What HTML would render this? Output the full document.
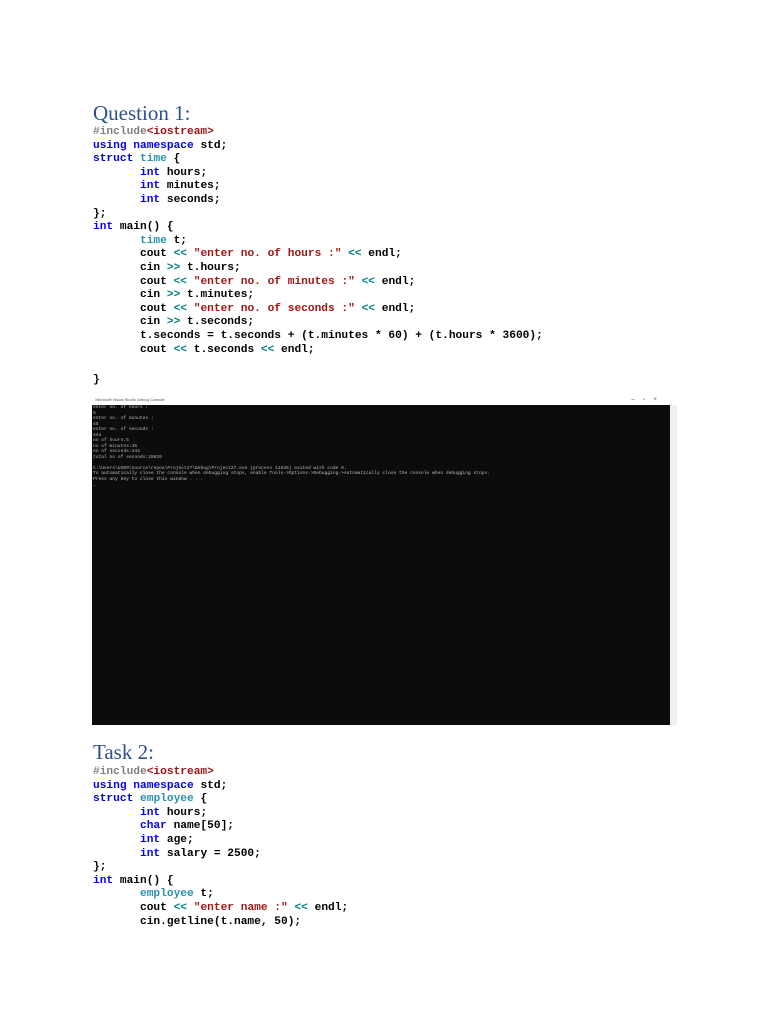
<!DOCTYPE html>
<html><head><meta charset="utf-8"><style>
body{margin:0;width:768px;height:1024px;background:#fff;position:relative;overflow:hidden}
h2{position:absolute;margin:0;font:21px "Liberation Serif",serif;color:#2f4f8f;left:93px}
pre{position:absolute;left:93px;margin:0;font:bold 11.2px/13.6px "Liberation Mono",monospace;color:#000;tab-size:7;-moz-tab-size:7}
.k{color:#0000ff}.t{color:#2b91af}.s{color:#a31515}.p{color:#808080}.o{color:#008080}
.con{position:absolute;left:92px;top:397px;width:585px;height:328px;background:#0c0c0c}
.tb{position:absolute;left:0;top:0;width:585px;height:8px;background:#fff;font:4px "Liberation Sans",sans-serif;color:#555}
.sb{position:absolute;right:0;top:8px;width:7px;height:320px;background:#f0f0f0}
.ct{position:absolute;left:1px;top:8px;font:4.6px/5.5px "Liberation Mono",monospace;color:#bbb;white-space:pre}
</style></head><body>
<h2 style="top:101px">Question 1:</h2>
<pre style="top:126px"><span class="p">#include</span><span class="s">&lt;iostream&gt;</span>
<span class="k">using</span> <span class="k">namespace</span> std;
<span class="k">struct</span> <span class="t">time</span> {
	<span class="k">int</span> hours;
	<span class="k">int</span> minutes;
	<span class="k">int</span> seconds;
};
<span class="k">int</span> main() {
	<span class="t">time</span> t;
	cout <span class="o">&lt;&lt;</span> <span class="s">"enter no. of hours :"</span> <span class="o">&lt;&lt;</span> endl;
	cin <span class="o">&gt;&gt;</span> t.hours;
	cout <span class="o">&lt;&lt;</span> <span class="s">"enter no. of minutes :"</span> <span class="o">&lt;&lt;</span> endl;
	cin <span class="o">&gt;&gt;</span> t.minutes;
	cout <span class="o">&lt;&lt;</span> <span class="s">"enter no. of seconds :"</span> <span class="o">&lt;&lt;</span> endl;
	cin <span class="o">&gt;&gt;</span> t.seconds;
	t.seconds = t.seconds + (t.minutes * 60) + (t.hours * 3600);
	cout <span class="o">&lt;&lt;</span> t.seconds <span class="o">&lt;&lt;</span> endl;</pre>
<pre style="top:374px">}</pre>
<div class="con"><div class="tb">&nbsp;&nbsp;&nbsp;Microsoft Visual Studio Debug Console<span style="position:absolute;right:20px;top:0;font-size:6px">–&nbsp;&nbsp;&nbsp;&nbsp;&nbsp;▫&nbsp;&nbsp;&nbsp;&nbsp;&nbsp;×</span></div><div class="sb"></div>
<div class="ct">enter no. of hours :
5
enter no. of minutes :
45
enter no. of seconds :
444
no of hours:5
no of minutes:45
no of seconds:444
total no of seconds:20826

C:\Users\USER\source\repos\Project27\Debug\Project27.exe (process 11836) exited with code 0.
To automatically close the console when debugging stops, enable Tools->Options->Debugging->Automatically close the console when debugging stops.
Press any key to close this window . . .
_</div></div>
<h2 style="top:740px">Task 2:</h2>
<pre style="top:766px"><span class="p">#include</span><span class="s">&lt;iostream&gt;</span>
<span class="k">using</span> <span class="k">namespace</span> std;
<span class="k">struct</span> <span class="t">employee</span> {
	<span class="k">int</span> hours;
	<span class="k">char</span> name[50];
	<span class="k">int</span> age;
	<span class="k">int</span> salary = 2500;
};
<span class="k">int</span> main() {
	<span class="t">employee</span> t;
	cout <span class="o">&lt;&lt;</span> <span class="s">"enter name :"</span> <span class="o">&lt;&lt;</span> endl;
	cin.getline(t.name, 50);</pre>
</body></html>
